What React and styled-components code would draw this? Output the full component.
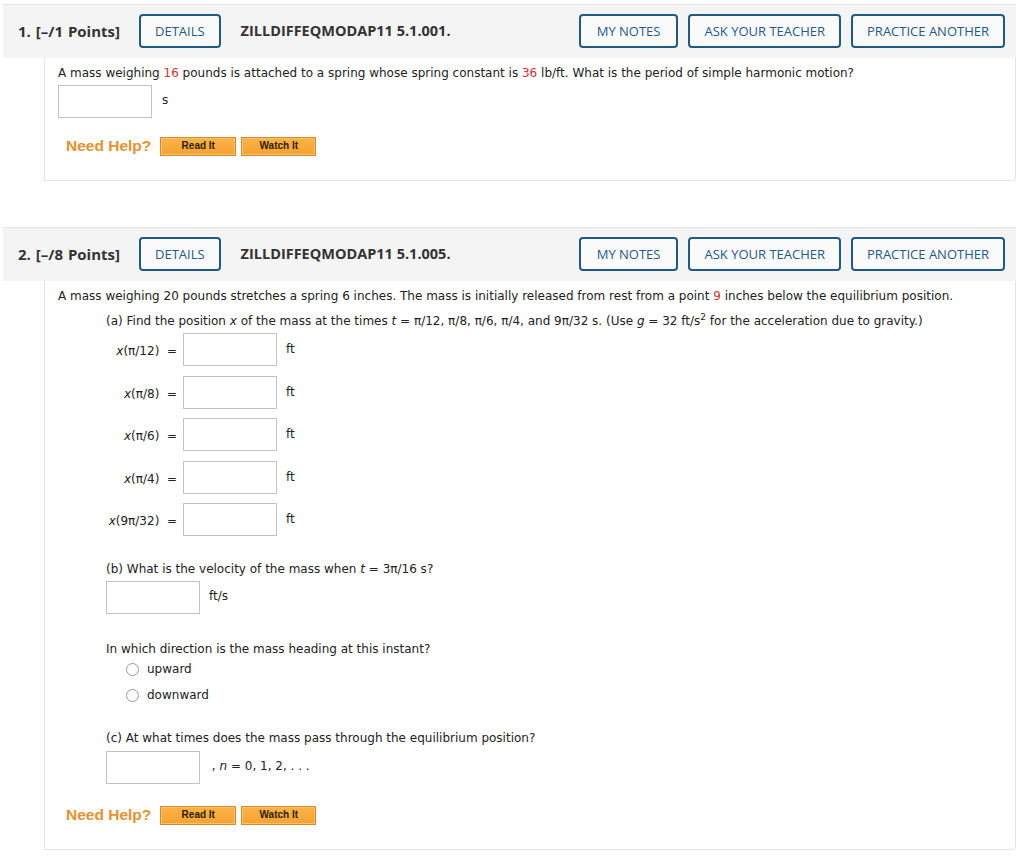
import React from 'react'
import styled, { createGlobalStyle } from 'styled-components'

const GlobalStyle = createGlobalStyle`
  html, body {
    margin: 0;
    padding: 0;
    background: #ffffff;
  }

  body {
    padding: 4px 8px 0 3px;
    font-family: 'DejaVu Sans', Verdana, sans-serif;
    color: #222;
  }
`

const Question = styled.div`
  width: 1013px;
  margin-bottom: ${props => props.gap || 0}px;
`

const Header = styled.div`
  display: flex;
  align-items: center;
  height: 53px;
  padding: 0 11px 0 15px;
  background: #f4f4f4;
  border-top: 1px solid #e6e6e6;
  font-family: 'Open Sans', sans-serif;
`

const Points = styled.span`
  font-size: 15px;
  font-weight: 700;
  color: #333;
  margin-right: 19px;
  word-spacing: 1px;
  margin-top: -2px;
`

const Title = styled.span`
  font-size: 14.5px;
  font-weight: 700;
  color: #333;
  margin-left: 20px;
  flex: 1;
  margin-top: -2px;
`

const HeaderButton = styled.button`
  height: 34px;
  padding: 0 ${props => props.pad || 14}px;
  margin-left: ${props => props.gap || 0}px;
  margin-top: -2px;
  border: 2px solid #1f5a86;
  border-radius: 4px;
  background: #fafafa;
  color: #24598a;
  font-family: 'Open Sans', sans-serif;
  font-size: 13px;
  font-weight: 500;
  cursor: pointer;
`

const Body = styled.div`
  margin-left: 41px;
  padding: 6px 14px 23px 13px;
  border: 1px solid #e4e4e4;
  border-top: none;
  border-radius: 0 0 4px 0;
  background: #fff;
  font-size: 12px;
  line-height: 18px;
`

const Line = styled.div`
  margin-top: ${props => props.top || 0}px;
  padding-left: ${props => props.indent || 0}px;
  white-space: nowrap;
`

const Red = styled.span`
  color: #d33030;
`

const Var = styled.i`
  font-style: italic;
`

const Sup = styled.sup`
  font-size: 9px;
  line-height: 0;
`

const Input = styled.div`
  width: 92px;
  height: 31px;
  border: 1px solid #c3c3c3;
  background: #fff;
  flex-shrink: 0;
`

const AnswerRow = styled.div`
  display: flex;
  align-items: center;
  margin-top: ${props => props.top || 0}px;
  padding-left: ${props => props.indent || 0}px;
`

const Unit = styled.span`
  margin-left: ${props => props.gap || 10}px;
  margin-top: -4px;
  white-space: nowrap;
`

const PartGrid = styled.div`
  display: grid;
  grid-template-columns: 71px 93px auto;
  column-gap: 6px;
  row-gap: 9.5px;
  align-items: center;
  margin-top: 3px;
  padding-left: 48px;
`

const Label = styled.span`
  text-align: right;
  white-space: nowrap;
  margin-top: 3px;
`

const GridUnit = styled.span`
  margin-left: 4px;
  margin-top: -1px;
`

const Choice = styled.label`
  display: flex;
  align-items: center;
  margin-top: ${props => props.top || 0}px;
  padding-left: 68px;
`

const Radio = styled.span`
  width: 11px;
  height: 11px;
  border: 1px solid #9a9a9a;
  border-radius: 50%;
  background: #fff;
  margin-right: 8px;
`

const HelpRow = styled.div`
  display: flex;
  align-items: center;
  height: 22px;
  margin-top: ${props => props.top || 0}px;
  padding-left: 8px;
`

const HelpText = styled.span`
  font-family: 'Liberation Sans', Arial, sans-serif;
  font-size: 15.5px;
  font-weight: 700;
  color: #e8912d;
  margin-right: 9px;
`

const HelpButton = styled.span`
  display: inline-flex;
  align-items: center;
  justify-content: center;
  width: ${props => props.w}px;
  height: 19px;
  box-sizing: border-box;
  margin-right: 5px;
  border: 1px solid #d88a2a;
  box-shadow: inset 0 0 0 1px #fcc266;
  background: linear-gradient(#fbb347, #f5a233);
  font-family: 'Liberation Sans', Arial, sans-serif;
  font-size: 10px;
  font-weight: 700;
  color: #2c1e05;
`

const NeedHelp = ({ top }) => (
  <HelpRow top={top}>
    <HelpText>Need Help?</HelpText>
    <HelpButton w={76}>Read It</HelpButton>
    <HelpButton w={75}>Watch It</HelpButton>
  </HelpRow>
)

const QuestionHeader = ({ number, points, code }) => (
  <Header>
    <Points>
      {number}. [–/{points} Points]
    </Points>
    <HeaderButton pad={14}>DETAILS</HeaderButton>
    <Title>{code}</Title>
    <HeaderButton pad={16}>MY NOTES</HeaderButton>
    <HeaderButton pad={14} gap={10}>
      ASK YOUR TEACHER
    </HeaderButton>
    <HeaderButton pad={14} gap={10}>
      PRACTICE ANOTHER
    </HeaderButton>
  </Header>
)

const positions = ['π/12', 'π/8', 'π/6', 'π/4', '9π/32']

const App = () => (
  <>
    <GlobalStyle />
    <Question gap={46}>
      <QuestionHeader number={1} points={1} code="ZILLDIFFEQMODAP11 5.1.001." />
      <Body>
        <Line>
          A mass weighing <Red>16</Red> pounds is attached to a spring whose
          spring constant is <Red>36</Red> lb/ft. What is the period of simple
          harmonic motion?
        </Line>
        <AnswerRow top={3}>
          <Input />
          <Unit>s</Unit>
        </AnswerRow>
        <NeedHelp top={17} />
      </Body>
    </Question>

    <Question>
      <QuestionHeader number={2} points={8} code="ZILLDIFFEQMODAP11 5.1.005." />
      <Body>
        <Line>
          A mass weighing 20 pounds stretches a spring 6 inches. The mass is
          initially released from rest from a point <Red>9</Red> inches below
          the equilibrium position.
        </Line>
        <Line top={7} indent={48}>
          (a) Find the position <Var>x</Var> of the mass at the times{' '}
          <Var>t</Var> = π/12, π/8, π/6, π/4, and 9π/32 s. (Use <Var>g</Var> =
          32 ft/s<Sup>2</Sup> for the acceleration due to gravity.)
        </Line>
        <PartGrid>
          {positions.map(label => (
            <React.Fragment key={label}>
              <Label>
                <Var>x</Var>({label}) &nbsp;=
              </Label>
              <Input />
              <GridUnit>ft</GridUnit>
            </React.Fragment>
          ))}
        </PartGrid>
        <Line top={24} indent={48}>
          (b) What is the velocity of the mass when <Var>t</Var> = 3π/16 s?
        </Line>
        <AnswerRow top={3} indent={48}>
          <Input />
          <Unit gap={9}>ft/s</Unit>
        </AnswerRow>
        <Line top={26} indent={48}>
          In which direction is the mass heading at this instant?
        </Line>
        <Choice top={2}>
          <Radio />
          upward
        </Choice>
        <Choice top={8}>
          <Radio />
          downward
        </Choice>
        <Line top={25} indent={48}>
          (c) At what times does the mass pass through the equilibrium
          position?
        </Line>
        <AnswerRow top={4} indent={48}>
          <Input />
          <Unit gap={8}>
            &nbsp;, <Var>n</Var> = 0, 1, 2, . . .
          </Unit>
        </AnswerRow>
        <NeedHelp top={20} />
      </Body>
    </Question>
  </>
)

export default App
